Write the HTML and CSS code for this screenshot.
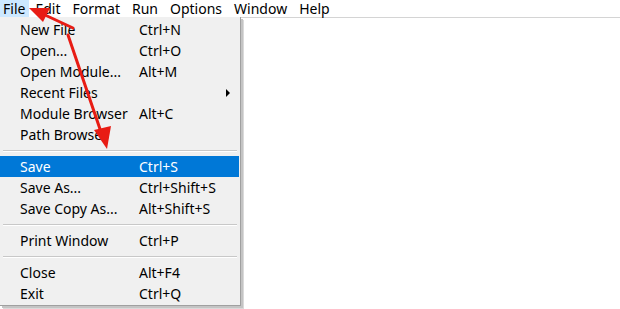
FILE: index.html
```html
<!DOCTYPE html>
<html lang="en">
<head>
    <meta charset="UTF-8">
    <title>IDLE - File menu</title>
    <link rel="stylesheet" href="styles.css">
</head>
<body>
    <div class="menubar">
        <span class="menubar-item active">File</span>
        <span class="menubar-item">Edit</span>
        <span class="menubar-item">Format</span>
        <span class="menubar-item">Run</span>
        <span class="menubar-item">Options</span>
        <span class="menubar-item">Window</span>
        <span class="menubar-item">Help</span>
    </div>

    <div class="menu">
        <div class="menu-row"><span class="label">New File</span><span class="accel">Ctrl+N</span></div>
        <div class="menu-row"><span class="label">Open...</span><span class="accel">Ctrl+O</span></div>
        <div class="menu-row"><span class="label">Open Module...</span><span class="accel">Alt+M</span></div>
        <div class="menu-row"><span class="label">Recent Files</span><span class="accel"></span><span class="submenu"></span></div>
        <div class="menu-row"><span class="label">Module Browser</span><span class="accel">Alt+C</span></div>
        <div class="menu-row"><span class="label">Path Browser</span><span class="accel"></span></div>
        <div class="separator"></div>
        <div class="menu-row selected"><span class="label">Save</span><span class="accel">Ctrl+S</span></div>
        <div class="menu-row"><span class="label">Save As...</span><span class="accel">Ctrl+Shift+S</span></div>
        <div class="menu-row"><span class="label">Save Copy As...</span><span class="accel">Alt+Shift+S</span></div>
        <div class="separator"></div>
        <div class="menu-row"><span class="label">Print Window</span><span class="accel">Ctrl+P</span></div>
        <div class="separator"></div>
        <div class="menu-row"><span class="label">Close</span><span class="accel">Alt+F4</span></div>
        <div class="menu-row"><span class="label">Exit</span><span class="accel">Ctrl+Q</span></div>
    </div>

    <!-- annotation arrows drawn over the screenshot -->
    <svg class="arrows" width="620" height="309" viewBox="0 0 620 309">
        <line x1="73" y1="28" x2="45" y2="15" stroke="#e81c14" stroke-width="3" stroke-linecap="round"/>
        <polygon points="29,8 50,8 43,22" fill="#e81c14"/>
        <line x1="68" y1="35" x2="101" y2="132" stroke="#e81c14" stroke-width="3" stroke-linecap="round"/>
        <polygon points="107,149 94,130 111,126" fill="#e81c14"/>
    </svg>
</body>
</html>
```

FILE: styles.css
```css
* {
    margin: 0;
    padding: 0;
    box-sizing: border-box;
}

body {
    width: 620px;
    height: 309px;
    overflow: hidden;
    background: #fff;
    font-family: 'Noto Sans', 'Open Sans', sans-serif;
    font-size: 14px;
    color: #000;
    position: relative;
}

.menubar {
    height: 18px;
    display: flex;
    align-items: stretch;
    border-bottom: 1px solid #d4d4d4;
}

.menubar-item {
    padding: 0 6px;
    line-height: 17px;
}

.menubar-item:first-child {
    padding-left: 3px;
    padding-right: 4px;
}

.menubar-item.active {
    background: #cce8ff;
}

.menu {
    width: 241px;
    height: 289px;
    background: #f0f0f0;
    border-right: 1px solid #a0a0a0;
    border-bottom: 1px solid #a0a0a0;
    box-shadow: 2px 2px 0 #c4c4c4, 3px 3px 0 #dadada;
    padding: 2px 1px 0 0;
    margin-top: -1px;
}

.menu-row {
    height: 21px;
    display: flex;
    align-items: center;
    position: relative;
}

.menu-row .label {
    width: 139px;
    padding-left: 20px;
}

.menu-row.selected {
    background: #0078d7;
    color: #fff;
}

.submenu {
    position: absolute;
    right: 9px;
    top: 7px;
    width: 0;
    height: 0;
    border-top: 4px solid transparent;
    border-bottom: 4px solid transparent;
    border-left: 4px solid #000;
}

.separator {
    height: 11px;
    display: flex;
    align-items: center;
    padding: 0 2px 0 3px;
}

.separator::after {
    content: "";
    display: block;
    width: 100%;
    height: 1px;
    background: #c8c8c8;
    box-shadow: 0 1px 0 #fff;
}

.arrows {
    position: absolute;
    left: 0;
    top: 0;
    pointer-events: none;
}
```
